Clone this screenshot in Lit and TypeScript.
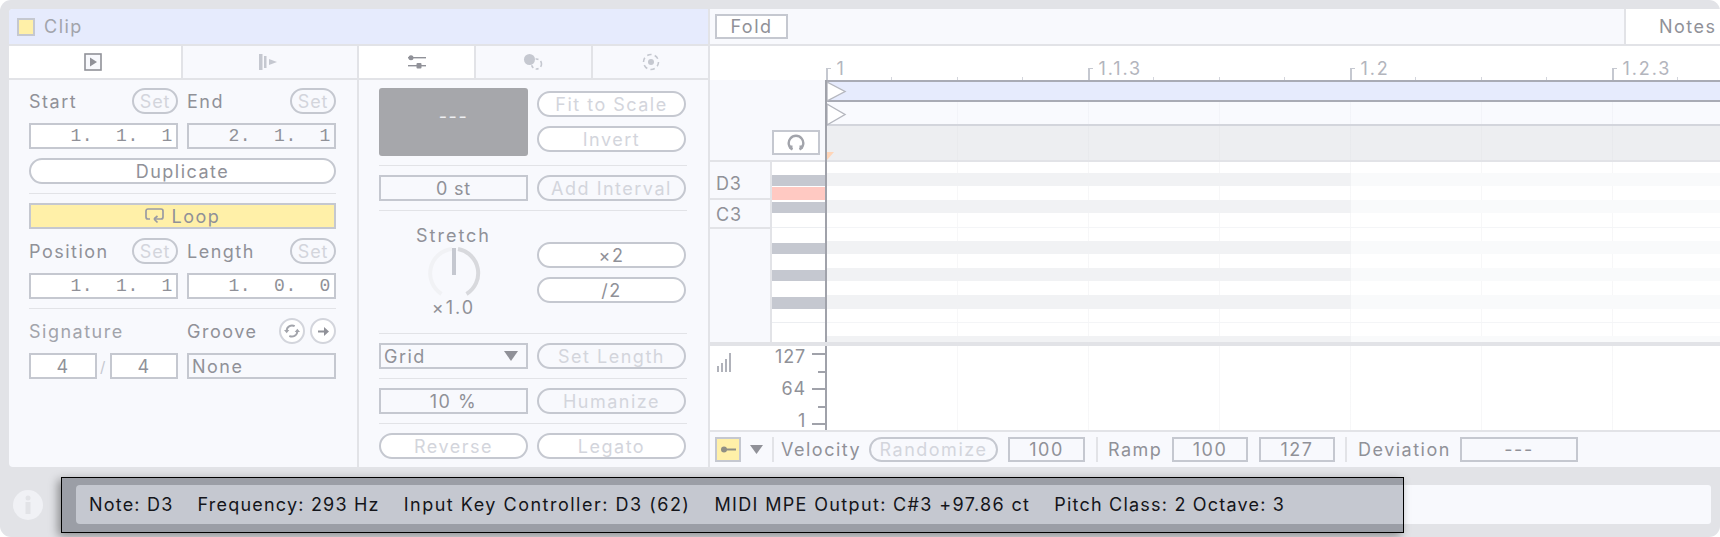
import { LitElement, html, css } from 'lit';
import { customElement } from 'lit/decorators.js';

// one entry per semitone, top of the roll downwards
const PITCHES = ['w', 'b', 'p', 'b', 'w', 'c', 'b', 'w', 'b', 'w', 'b', 'w', 'c', 'd'];

@customElement('app-root')
export class AppRoot extends LitElement {
  static styles = css`
    :host {
      display: block;
      width: 1720px;
      height: 537px;
      background: #fff;
      font-family: Inter, 'Liberation Sans', sans-serif;
      font-size: 18px;
      letter-spacing: 1.5px;
      color: #909198;
      overflow: hidden;
    }
    .frame {
      height: 537px;
      box-sizing: border-box;
      padding: 9px 0 0 9px;
      background: #e2e3e7;
      border-radius: 11px;
      overflow: hidden;
    }
    .main {
      display: flex;
      height: 458px;
      border-radius: 4px 0 0 4px;
      overflow: hidden;
    }
    .detail {
      width: 699px;
      display: flex;
      flex-direction: column;
      background: #f8f9fd;
    }
    .title {
      height: 35px;
      display: flex;
      align-items: center;
      gap: 9px;
      padding-left: 8px;
      background: #e6ebfd;
      color: #a2a4ab;
      border-bottom: 2px solid #e2e3e7;
    }
    .swatch {
      width: 14px;
      height: 14px;
      background: #fff0a8;
      border: 2px solid #c5c8d0;
    }
    .panes {
      flex: 1;
      display: flex;
    }
    .pane {
      display: flex;
      flex-direction: column;
    }
    .pane.clip {
      width: 348px;
      border-right: 2px solid #e2e3e7;
    }
    .pane.edit {
      width: 349px;
    }
    .tabs {
      height: 32px;
      display: flex;
      border-bottom: 2px solid #e2e3e7;
    }
    .tab {
      flex: 1;
      display: flex;
      align-items: center;
      justify-content: center;
      border-left: 2px solid #e2e3e7;
    }
    .tab:first-child {
      border-left: none;
    }
    .tab.on {
      background: #fff;
    }
    .clip .tab:first-child {
      flex: 0 0 172px;
      box-sizing: border-box;
      padding-right: 4px;
    }
    .clip .tab:last-child {
      padding-right: 4px;
    }
    .stack {
      display: flex;
      flex-direction: column;
      gap: 9px;
      padding: 8px 21px 0 20px;
    }
    .row {
      display: grid;
      grid-template-columns: 149px 149px;
      column-gap: 9px;
    }
    .divider {
      height: 1px;
      background: #e2e3e7;
    }
    .labelled {
      height: 26px;
      display: flex;
      align-items: center;
      justify-content: space-between;
    }
    .ctl {
      height: 26px;
      box-sizing: border-box;
      display: flex;
      align-items: center;
      justify-content: center;
      border: 2px solid #c5c8d0;
      white-space: pre;
    }
    .pill {
      border-radius: 13px;
      background: #fff;
    }
    .pill.off {
      background: none;
      color: #d3d5dc;
    }
    .pill.white {
      background: #fff;
      color: #d3d5dc;
    }
    .pill.live {
      background: #fff;
      color: #909198;
    }
    .set {
      width: 46px;
      letter-spacing: 0.8px;
    }
    .field {
      background: #f8f9fd;
    }
    .field.white {
      background: #fff;
    }
    .num {
      justify-content: flex-end;
      padding-right: 3px;
      font-family: 'Liberation Mono', monospace;
      letter-spacing: 0.6px;
    }
    .tight {
      letter-spacing: 0.8px;
    }
    .left {
      justify-content: flex-start;
      padding-left: 3px;
    }
    .loop {
      gap: 8px;
      background: #fff0a8;
    }
    .sig {
      display: flex;
      align-items: center;
      justify-content: space-between;
    }
    .sig .ctl {
      width: 68px;
    }
    .slash {
      color: #c5c8d0;
      font-size: 15px;
    }
    .sig-row .field {
      background: #fff;
    }
    .round {
      width: 26px;
      height: 26px;
      box-sizing: border-box;
      border: 2px solid #d3d5dc;
      border-radius: 50%;
      background: #fff;
      display: flex;
      align-items: center;
      justify-content: center;
    }
    .round-group {
      display: flex;
      gap: 5px;
    }
    .muted {
      color: #a2a4ab;
    }
    .scale-box {
      height: 68px;
      padding-bottom: 12px;
      box-sizing: border-box;
      display: flex;
      align-items: center;
      justify-content: center;
      background: #a6a7ab;
      border-radius: 3px;
      color: #eeeff2;
    }
    .pills {
      display: flex;
      flex-direction: column;
      gap: 9px;
      padding-top: 3px;
    }
    .stretch {
      height: 104px;
    }
    .stretch .pills {
      padding-top: 22px;
    }
    .knob {
      display: flex;
      flex-direction: column;
      align-items: center;
      line-height: 22px;
      padding-top: 5px;
      letter-spacing: 2px;
    }
    .select {
      justify-content: space-between;
      padding: 0 8px 0 3px;
    }

    .roll {
      width: 1010px;
      margin-left: 2px;
      display: flex;
      flex-direction: column;
      background: #fff;
    }
    .roll-top {
      height: 35px;
      flex: none;
      display: flex;
      align-items: center;
      justify-content: space-between;
      padding-left: 5px;
      background: #f8f9fd;
      border-bottom: 2px solid #e2e3e7;
    }
    .fold {
      width: 73px;
      height: 25px;
      background: #fff;
    }
    .notes {
      width: 96px;
      height: 35px;
      box-sizing: border-box;
      padding-left: 33px;
      display: flex;
      align-items: center;
      background: #fff;
      border-left: 2px solid #e2e3e7;
      overflow: hidden;
      white-space: nowrap;
    }
    .ruler {
      height: 34px;
      flex: none;
      box-sizing: border-box;
      padding-left: 115.5px;
      display: flex;
      overflow: hidden;
      color: #b3b5bd;
      letter-spacing: 1.9px;
    }
    .bar {
      flex: none;
      width: 262px;
      display: flex;
      align-items: flex-end;
    }
    .beat {
      flex: none;
      width: 65.5px;
      height: 3px;
      box-sizing: border-box;
      border-left: 1px solid #d3d5dc;
    }
    .beat.major {
      position: relative;
      height: 12px;
      border-left: 2px solid #c5c8d0;
    }
    .beat.major::before {
      content: '';
      position: absolute;
      left: 0;
      top: 0;
      width: 3px;
      height: 1px;
      background: #c5c8d0;
    }
    .beat.major span {
      position: absolute;
      left: 9px;
      bottom: 2px;
      line-height: 18px;
      white-space: nowrap;
    }
    .head {
      display: grid;
      grid-template-columns: 115px 1fr;
      height: 82px;
      flex: none;
    }
    .head-side {
      display: flex;
      align-items: flex-end;
      justify-content: flex-end;
      padding: 0 5px 5px 0;
      background: #f8f9fd;
      border-bottom: 2px solid #e2e3e7;
    }
    .phones {
      width: 48px;
      height: 25px;
      background: #fff;
    }
    .lane,
    .rows,
    .vel-lane {
      border-left: 2px solid #a0a2aa;
      background-image: repeating-linear-gradient(
        90deg,
        transparent 0 130px,
        rgba(150, 152, 165, 0.08) 130px 131px
      );
    }
    .lane {
      position: relative;
    }
    .strip-clip {
      height: 22px;
      box-sizing: border-box;
      background: #e6ebfd;
      border-top: 2px solid #a9abb5;
      border-bottom: 2px solid #a9abb5;
    }
    .strip-loop {
      height: 24px;
      box-sizing: border-box;
      background: rgba(230, 235, 253, 0.25);
      border-bottom: 2px solid #d3d5dc;
    }
    .strip-time {
      height: 36px;
      box-sizing: border-box;
      background: rgba(215, 217, 224, 0.45);
      border-bottom: 2px solid #e2e3e7;
    }
    .flag {
      position: absolute;
      left: 0;
    }
    .flag.a {
      top: 1px;
    }
    .flag.b {
      top: 23px;
    }
    .flag.c {
      top: 72px;
    }
    .piano {
      height: 180px;
      flex: none;
      display: grid;
      grid-template-columns: 62px 53px 1fr;
      overflow: hidden;
    }
    .names {
      background: #f8f9fd;
      border-right: 2px solid #e2e3e7;
      display: flex;
      flex-direction: column;
      letter-spacing: 0.8px;
    }
    .name {
      display: flex;
      align-items: flex-end;
      box-sizing: border-box;
      padding: 0 0 4px 6px;
      border-bottom: 2px solid #e2e3e7;
    }
    .name.d {
      height: 38px;
    }
    .name.c {
      height: 29px;
      padding-bottom: 2px;
    }
    .keys,
    .rows {
      display: flex;
      flex-direction: column;
    }
    .k,
    .r {
      height: 13.6px;
      flex: none;
      box-sizing: border-box;
    }
    .k:first-child,
    .r:first-child {
      height: 10.7px;
    }
    .k.b {
      border-top: 2px solid #fff;
      background: #c5c8d0;
    }
    .k.p {
      border-top: 1px solid #fff;
      background: #ffc9c2;
    }
    .k.c {
      border-top: 1px solid #eceef1;
    }
    .r.b,
    .r.d {
      background: linear-gradient(90deg, #f1f2f4 0 524px, #f9fafb 524px);
    }
    .r.c {
      border-top: 1px solid #f4f5f7;
    }
    .thick {
      height: 4px;
      flex: none;
      background: #e2e3e7;
    }
    .vel {
      height: 84px;
      flex: none;
      display: grid;
      grid-template-columns: 115px 1fr;
    }
    .vel-side {
      display: flex;
      box-sizing: border-box;
      padding: 7px 0 0 7px;
      justify-content: space-between;
    }
    .scale-wrap {
      display: flex;
    }
    .scale {
      display: flex;
      flex-direction: column;
      align-items: flex-end;
      margin-top: -8px;
      padding-right: 5px;
      letter-spacing: 0.8px;
    }
    .scale div {
      height: 32px;
      line-height: 24px;
    }
    .scale-rule {
      flex: none;
      width: 14px;
      height: 77px;
      box-sizing: border-box;
      background-image: linear-gradient(#a0a2aa, #a0a2aa), linear-gradient(#a0a2aa, #a0a2aa),
        linear-gradient(#a0a2aa, #a0a2aa), linear-gradient(#a0a2aa, #a0a2aa),
        linear-gradient(#a0a2aa, #a0a2aa);
      background-size: 13px 2px, 7px 2px, 13px 2px, 7px 2px, 13px 2px;
      background-position: right 0 top 0, right 0 top 18px, right 0 top 35px, right 0 top 53px,
        right 0 top 70px;
      background-repeat: no-repeat;
    }
    .tools {
      flex: 1;
      display: flex;
      align-items: center;
      box-sizing: border-box;
      padding-left: 5px;
      background: #f8f9fd;
      border-top: 2px solid #e2e3e7;
    }
    .tool-box {
      height: 25px;
      flex: none;
      background: #f8f9fd;
    }
    .tool-key {
      width: 26px;
      height: 25px;
      flex: none;
      background: #fff0a8;
    }
    .tri {
      margin: 0 9px;
      flex: none;
    }
    .bar-sep {
      width: 2px;
      height: 25px;
      flex: none;
      background: #e2e3e7;
    }
    .word {
      flex: none;
      white-space: nowrap;
    }
    .velocity {
      width: 79px;
      margin: 0 9px 0 7px;
    }
    .randomize {
      width: 129px;
    }
    .vel-value {
      width: 77px;
      margin-left: 10px;
    }
    .sep-a {
      margin: 0 10px 0 11px;
    }
    .ramp {
      width: 55px;
    }
    .ramp-from {
      width: 76px;
      margin-left: 9px;
    }
    .ramp-to {
      width: 76px;
      margin-left: 11px;
    }
    .sep-b {
      margin: 0 11px 0 10px;
    }
    .deviation {
      width: 93px;
    }
    .dev-value {
      width: 118px;
      margin-left: 9px;
    }
    .statusbar {
      flex: 1;
      display: flex;
      align-items: center;
      position: relative;
      height: 70px;
      margin-left: -9px;
      padding: 5px 9px 0 13px;
      box-sizing: border-box;
    }
    .info {
      width: 30px;
      height: 30px;
      flex: none;
      margin-right: 18px;
      display: flex;
      align-items: center;
      justify-content: center;
      border-radius: 50%;
      background: #f0f1f5;
    }
    .status-input {
      flex: 1;
      height: 39px;
      background: #f8f9fd;
      border-radius: 3px;
    }
    .tip {
      position: absolute;
      left: 61px;
      top: 10px;
      width: 1343px;
      height: 56px;
      box-sizing: border-box;
      border: 1px solid #000;
      padding: 7px 0 8px 14px;
      background: #9b9ea6;
      box-shadow: -3px 3px 9px rgba(0, 0, 0, 0.4);
    }
    .tip-in {
      height: 39px;
      box-sizing: border-box;
      display: flex;
      align-items: center;
      padding-left: 13px;
      border-radius: 4px 0 0 4px;
      background: #c5c8d0;
      color: #14151a;
      letter-spacing: 1.2px;
      white-space: nowrap;
    }
    .tip-in span {
      margin-right: 24px;
    }
    .tip-in .input-key {
      letter-spacing: 1.5px;
    }
    .tip-in .mpe {
      letter-spacing: 1.35px;
    }
  `;

  private ruler() {
    const labels = ['1', '1.1.3', '1.2', '1.2.3'];
    return labels.map(
      (label) => html`<div class="bar">
        <div class="beat major"><span>${label}</span></div>
        <div class="beat"></div>
        <div class="beat"></div>
        <div class="beat"></div>
      </div>`
    );
  }

  private setRow(left: string, right: string) {
    return html`<div class="row">
      <div class="labelled">${left}<div class="ctl pill off set">Set</div></div>
      <div class="labelled">${right}<div class="ctl pill off set">Set</div></div>
    </div>`;
  }

  private numRow(a: string, b: string, firstWhite: boolean, secondWhite: boolean) {
    return html`<div class="row">
      <div class="ctl field num ${firstWhite ? 'white' : ''}">${a}</div>
      <div class="ctl field num ${secondWhite ? 'white' : ''}">${b}</div>
    </div>`;
  }

  private clipPane() {
    return html`<div class="pane clip">
      <div class="tabs">
        <div class="tab on">
          <svg width="18" height="18" viewBox="0 0 18 18">
            <rect x="1" y="1" width="16" height="16" fill="#f8f9fd" stroke="#909198" stroke-width="1.6" />
            <path d="M6 4.5 13 9 6 13.5Z" fill="#909198" />
          </svg>
        </div>
        <div class="tab">
          <svg width="18" height="18" viewBox="0 0 18 18" fill="#c5c8d0">
            <rect x="0" y="1" width="3.5" height="16" />
            <rect x="5" y="3" width="2.5" height="12" />
            <path d="M10 6 18 9 10 12Z" />
          </svg>
        </div>
      </div>
      <div class="stack">
        ${this.setRow('Start', 'End')}
        ${this.numRow('1.  1.  1', '2.  1.  1', true, false)}
        <div class="ctl pill live">Duplicate</div>
        <div class="divider"></div>
        <div class="ctl loop"><svg width="19" height="17" viewBox="0 0 19 17" fill="none" stroke="#9a9ba3" stroke-width="1.7">
            <path d="M5 11H3a2 2 0 0 1-2-2V3a2 2 0 0 1 2-2h13a2 2 0 0 1 2 2v6a2 2 0 0 1-2 2H9" />
            <path d="M9 11 12.5 8M9 11l3.5 3.5" />
          </svg><span>Loop</span></div>
        ${this.setRow('Position', 'Length')}
        ${this.numRow('1.  1.  1', '1.  0.  0', true, true)}
        <div class="divider"></div>
        <div class="row">
          <div class="labelled muted">Signature</div>
          <div class="labelled">
            Groove
            <div class="round-group">
              <div class="round">
                <svg width="16" height="16" viewBox="0 0 15 15" fill="none" stroke="#a2a4ab" stroke-width="1.8">
                  <path d="M2.5 7A5 5 0 0 1 10 3M12.5 8A5 5 0 0 1 5 12" />
                  <path d="M0 6.5h5L2.5 9.5ZM10 8.5h5L12.5 5.5Z" fill="#a2a4ab" stroke="none" />
                </svg>
              </div>
              <div class="round">
                <svg width="13" height="13" viewBox="0 0 13 13" fill="#909198">
                  <rect x="1" y="5.5" width="7" height="2" />
                  <path d="M7 2 12 6.5 7 11Z" />
                </svg>
              </div>
            </div>
          </div>
        </div>
        <div class="row sig-row">
          <div class="sig">
            <div class="ctl field">4</div>
            <span class="slash">/</span>
            <div class="ctl field">4</div>
          </div>
          <div class="ctl left">None</div>
        </div>
      </div>
    </div>`;
  }

  private editPane() {
    return html`<div class="pane edit">
      <div class="tabs">
        <div class="tab on">
          <svg width="20" height="16" viewBox="0 0 20 16" fill="#909198">
            <rect x="1" y="3" width="18" height="1.4" />
            <circle cx="4" cy="3.7" r="2.5" />
            <rect x="1" y="11" width="18" height="1.4" />
            <rect x="9.5" y="9" width="5" height="5.4" rx="1" />
          </svg>
        </div>
        <div class="tab">
          <svg width="22" height="18" viewBox="0 0 22 18">
            <circle cx="6.5" cy="6.5" r="5.5" fill="#c5c8d0" />
            <circle cx="13.500" cy="11" r="5" fill="none" stroke="#c5c8d0" stroke-width="1.6" stroke-dasharray="3 2.5" />
          </svg>
        </div>
        <div class="tab">
          <svg width="18" height="18" viewBox="0 0 18 18">
            <circle cx="9" cy="9" r="7.5" fill="none" stroke="#c5c8d0" stroke-width="1.6" stroke-dasharray="4.5 3.3" />
            <circle cx="9" cy="9" r="3" fill="#c5c8d0" />
          </svg>
        </div>
      </div>
      <div class="stack">
        <div class="row">
          <div class="scale-box">---</div>
          <div class="pills">
            <div class="ctl pill white">Fit to Scale</div>
            <div class="ctl pill white">Invert</div>
          </div>
        </div>
        <div class="divider"></div>
        <div class="row">
          <div class="ctl field tight">0 st</div>
          <div class="ctl pill off">Add Interval</div>
        </div>
        <div class="divider"></div>
        <div class="row stretch">
          <div class="knob">
            Stretch
            <svg width="54" height="50" viewBox="0 0 54 50" fill="none" stroke-width="4">
              <path d="M25 2A24.5 24.5 0 0 0 14.5 47" stroke="#f1f2f5" />
              <path d="M31 2A24.5 24.5 0 0 1 39.5 47" stroke="#d8d9dd" />
              <path d="M27 1V28" stroke="#c5c8d0" />
            </svg>
            <div>×1.0</div>
          </div>
          <div class="pills">
            <div class="ctl pill live">×2</div>
            <div class="ctl pill live">/2</div>
          </div>
        </div>
        <div class="divider"></div>
        <div class="row">
          <div class="ctl select"><span>Grid</span><svg width="14" height="10" viewBox="0 0 14 10"><path d="M0 0H14L7 10Z" fill="#909198" /></svg></div>
          <div class="ctl pill off">Set Length</div>
        </div>
        <div class="divider"></div>
        <div class="row">
          <div class="ctl field">10 %</div>
          <div class="ctl pill off">Humanize</div>
        </div>
        <div class="divider"></div>
        <div class="row">
          <div class="ctl pill white">Reverse</div>
          <div class="ctl pill white">Legato</div>
        </div>
      </div>
    </div>`;
  }

  private rollPane() {
    return html`<div class="roll">
      <div class="roll-top">
        <div class="ctl fold">Fold</div>
        <div class="notes">Notes</div>
      </div>
      <div class="ruler">${this.ruler()}</div>
      <div class="head">
        <div class="head-side">
          <div class="ctl phones">
            <svg width="18" height="17" viewBox="0 0 18 17" fill="none" stroke="#a2a4ab" stroke-width="2.4">
              <path d="M5.5 15.500A7.300 7.300 0 1 1 12.500 15.500" />
              <path d="M4 11.500v3.500M14 11.500v3.500" stroke-width="3" />
            </svg>
          </div>
        </div>
        <div class="lane">
          <div class="strip-clip"></div>
          <div class="strip-loop"></div>
          <div class="strip-time"></div>
          <svg class="flag a" width="20" height="21" viewBox="0 0 20 21">
            <path d="M0 1 18 10.5 0 20Z" fill="#fff" stroke="#b5b7bf" stroke-width="1.4" />
          </svg>
          <svg class="flag b" width="20" height="23" viewBox="0 0 20 23">
            <path d="M0 1 18 11.5 0 22Z" fill="#fff" stroke="#b5b7bf" stroke-width="1.4" />
          </svg>
          <svg class="flag c" width="8" height="8" viewBox="0 0 8 8"><path d="M0 0H7L0 8Z" fill="#ffd5b8" /></svg>
        </div>
      </div>
      <div class="piano">
        <div class="names">
          <div class="name d">D3</div>
          <div class="name c">C3</div>
        </div>
        <div class="keys">${PITCHES.map((p) => html`<div class="k ${p}"></div>`)}</div>
        <div class="rows">${PITCHES.map((p) => html`<div class="r ${p}"></div>`)}</div>
      </div>
      <div class="thick"></div>
      <div class="vel">
        <div class="vel-side">
          <svg width="15" height="19" viewBox="0 0 15 19" fill="#b0b2ba">
            <rect x="0" y="13" width="2" height="6" />
            <rect x="4" y="10" width="2" height="9" />
            <rect x="8" y="6" width="2" height="13" />
            <rect x="12" y="0" width="2" height="19" />
          </svg>
          <div class="scale-wrap">
            <div class="scale"><div>127</div><div>64</div><div>1</div></div>
            <div class="scale-rule"></div>
          </div>
        </div>
        <div class="vel-lane"></div>
      </div>
      <div class="tools">
        <div class="ctl tool-key">
          <svg width="15" height="7" viewBox="0 0 15 7" fill="#8f8f84">
            <circle cx="3" cy="3.5" r="3" />
            <rect x="3" y="2.5" width="12" height="2" />
          </svg>
        </div>
        <svg class="tri" width="13" height="9" viewBox="0 0 13 9"><path d="M0 0H13L6.5 9Z" fill="#909198" /></svg>
        <div class="bar-sep"></div>
        <span class="word velocity">Velocity</span>
        <div class="ctl pill off tool-box randomize">Randomize</div>
        <div class="ctl tool-box vel-value">100</div>
        <div class="bar-sep sep-a"></div>
        <span class="word ramp">Ramp</span>
        <div class="ctl tool-box ramp-from">100</div>
        <div class="ctl tool-box ramp-to">127</div>
        <div class="bar-sep sep-b"></div>
        <span class="word deviation">Deviation</span>
        <div class="ctl tool-box dev-value">---</div>
      </div>
    </div>`;
  }

  render() {
    return html`<div class="frame">
      <div class="main">
        <div class="detail">
          <div class="title"><div class="swatch"></div>Clip</div>
          <div class="panes">${this.clipPane()}${this.editPane()}</div>
        </div>
        ${this.rollPane()}
      </div>
      <div class="statusbar">
        <div class="info">
          <svg width="8" height="20" viewBox="0 0 8 20" fill="#e2e3e7">
            <circle cx="4" cy="3" r="2.5" />
            <rect x="1.5" y="7" width="5" height="12" />
          </svg>
        </div>
        <div class="status-input"></div>
        <div class="tip">
          <div class="tip-in">
            <span>Note: D3</span>
            <span>Frequency: 293 Hz</span>
            <span class="input-key">Input Key Controller: D3 (62)</span>
            <span class="mpe">MIDI MPE Output: C#3 +97.86 ct</span>
            <span>Pitch Class: 2 Octave: 3</span>
          </div>
        </div>
      </div>
    </div>`;
  }
}
